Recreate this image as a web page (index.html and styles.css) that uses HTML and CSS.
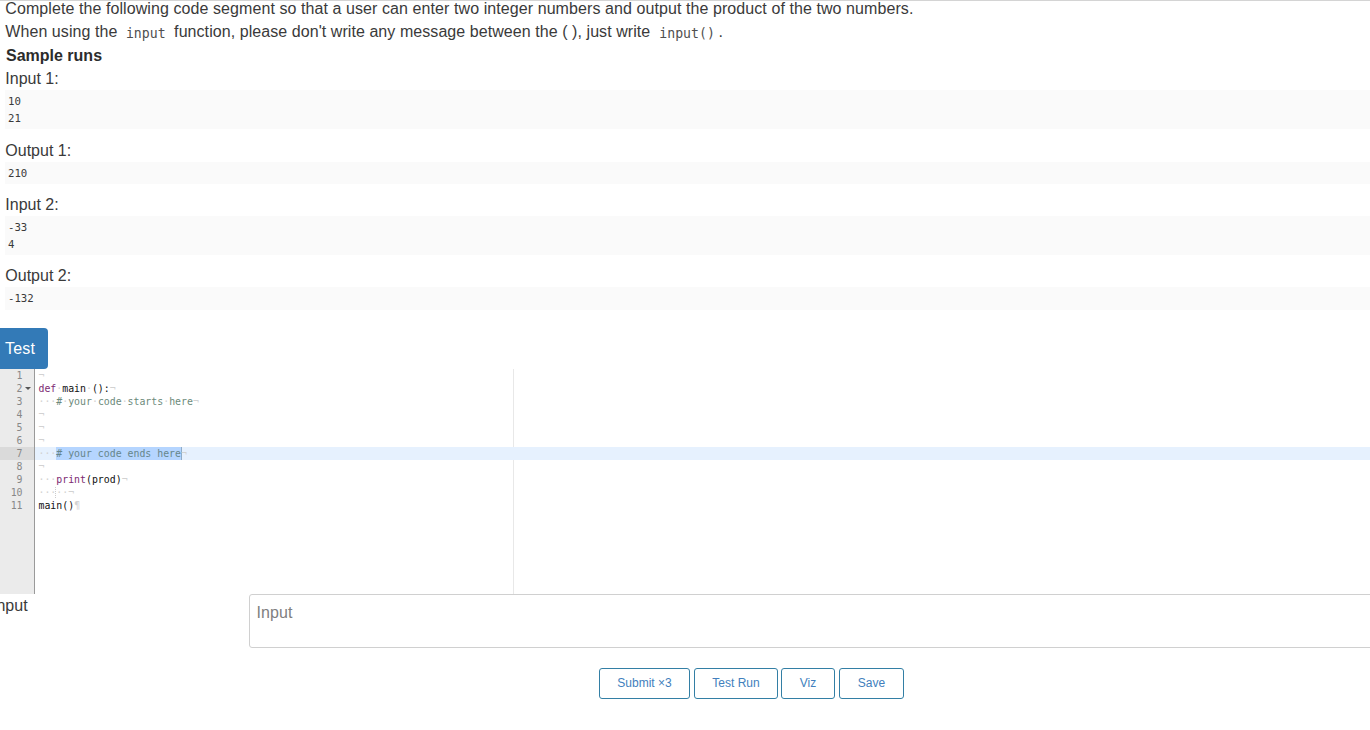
FILE: index.html
```html
<!DOCTYPE html>
<html lang="en">
<head>
<meta charset="utf-8">
<title>Code exercise</title>
<link rel="stylesheet" href="styles.css">
</head>
<body>
<section class="problem">
<p class="intro">Complete the following code segment so that a user can enter two integer numbers and output the product of the two numbers.</p>
<p class="note">When using the <code>input</code> function, please don't write any message between the ( ), just write <code>input()</code>.</p>
<h4>Sample runs</h4>
<p>Input 1:</p>
<pre>10
21</pre>
<p>Output 1:</p>
<pre>210</pre>
<p>Input 2:</p>
<pre>-33
4</pre>
<p>Output 2:</p>
<pre>-132</pre>
</section>
<button class="test">Test</button>
<section class="editor">
<div class="row"><span class="num">1</span><div class="code"><i>¬</i></div></div>
<div class="row"><span class="num fold">2</span><div class="code"><b>def</b><i>·</i>main<i>·</i>():<i>¬</i></div></div>
<div class="row"><span class="num">3</span><div class="code comment"><i>···</i>#<i>·</i>your<i>·</i>code<i>·</i>starts<i>·</i>here<i>¬</i></div></div>
<div class="row"><span class="num">4</span><div class="code"><i>¬</i></div></div>
<div class="row"><span class="num">5</span><div class="code"><i>¬</i></div></div>
<div class="row"><span class="num">6</span><div class="code"><i>¬</i></div></div>
<div class="row active"><span class="num">7</span><div class="code comment"><i>···</i><mark># your code ends here</mark><i>¬</i></div></div>
<div class="row"><span class="num">8</span><div class="code"><i>¬</i></div></div>
<div class="row"><span class="num">9</span><div class="code"><i>···</i><b>print</b>(prod)<i>¬</i></div></div>
<div class="row"><span class="num">10</span><div class="code"><i>···</i><i class="guide">··</i><i>¬</i></div></div>
<div class="row"><span class="num">11</span><div class="code">main()<i>¶</i></div></div>
<div class="row rest"><span class="num"></span><div class="code"></div></div>
</section>
<section class="stdin">
<label for="stdin">Input</label>
<textarea id="stdin" placeholder="Input"></textarea>
</section>
<div class="actions">
<button class="submit">Submit ×3</button>
<button class="run">Test Run</button>
<button class="viz">Viz</button>
<button class="save">Save</button>
</div>
</body>
</html>
```
FILE: styles.css
```css
* { box-sizing: border-box; }
body {
  margin: 0;
  height: 730px;
  overflow: hidden;
  background: #fff;
  color: #3a3a3a;
  font: 16px/23px "Liberation Sans", Arial, sans-serif;
  border-top: 1px solid #d4d4d4;
}
.problem { height: 327px; padding-left: 5px; margin-top: -4px; white-space: nowrap; }
p, h4, pre { margin: 0; }
p { padding-left: 0.3px; }
.intro { letter-spacing: 0.08px; }
.note { letter-spacing: 0.065px; }
h4 { font-size: 16px; line-height: 24px; height: 24px; padding: 1px 0 0 1px; color: #2c2c2c; }
code { font: 13.2px/20px "DejaVu Sans Mono", monospace; letter-spacing: 0; padding: 0 4px; color: #505050; position: relative; top: 1px; }
code:last-child { padding-left: 4.5px; padding-right: 3.5px; }
pre {
  font: 10.7px/17px "DejaVu Sans Mono", monospace;
  background: #fafafa;
  padding: 3px 3px 2px;
  margin-bottom: 9px;
}
pre:first-of-type { margin-bottom: 10px; }
pre:last-of-type { margin-bottom: 0; padding-bottom: 3px; }
.test {
  display: block;
  width: 48px;
  height: 41px;
  margin-top: 4px;
  padding: 0 0 0 5px;
  border: 0;
  border-radius: 0 4px 4px 0;
  background: #337ab7;
  color: #fff;
  font: 16px "Liberation Sans", Arial, sans-serif;
  letter-spacing: 0.2px;
  text-align: left;
}
.editor {
  position: relative;
  height: 225px;
  display: flex;
  flex-direction: column;
  font: 9.87px/13px "DejaVu Sans Mono", monospace;
  color: #111;
  white-space: pre;
}
.editor::before { content: ""; position: absolute; left: 513px; top: 0; bottom: 0; width: 1px; background: #e8e8e8; }
.row { display: flex; height: 13px; }
.row.rest { flex: 1; }
.num { position: relative; width: 35px; padding-right: 11.5px; text-align: right; background: #ebebeb; border-right: 1px solid #9a9a9a; color: #888; }
.fold::after { content: ""; position: absolute; left: 25px; top: 5px; border: 3px solid transparent; border-top-color: #555; border-bottom: 0; }
.code { flex: 1; padding-left: 3.5px; }
.code i { font-style: normal; color: #d2d2d2; }
.code b { font-weight: normal; color: #7d2a72; }
.code.comment { color: #6c8a7b; }
.active { z-index: 1; background: #e6f1fe; }
.active .num { background: #dadada; }
.active mark { display: inline-block; height: 13px; background: #b5d5ff; color: #66868b; border-right: 1px solid #8facc8; margin-right: -1px; }
.guide { border-left: 1px dotted #ccc; margin-left: -1px; }
.stdin { height: 54px; display: flex; }
.stdin label { width: 249px; margin-left: -8px; flex: none; }
.stdin textarea {
  flex: none;
  width: 1140px;
  height: 54px;
  margin-left: 8px;
  padding: 9px 6.5px;
  border: 1px solid #d0d0d0;
  border-radius: 3px;
  resize: none;
  overflow: hidden;
  font: 16px/18px "Liberation Sans", Arial, sans-serif;
  letter-spacing: 0.1px;
}
textarea::placeholder { color: #808080; }
.actions { display: flex; margin: 20px 0 0 599px; }
.actions button {
  height: 31px;
  padding: 0 0 2px;
  border: 1px solid #337fa5;
  border-radius: 3px;
  background: #fff;
  color: #427fbd;
  font: 12px "Liberation Sans", Arial, sans-serif;
}
.submit { width: 91px; margin-right: 4px; }
.run { width: 84px; margin-right: 3px; }
.viz { width: 54px; margin-right: 4px; }
.save { width: 65px; }
```
